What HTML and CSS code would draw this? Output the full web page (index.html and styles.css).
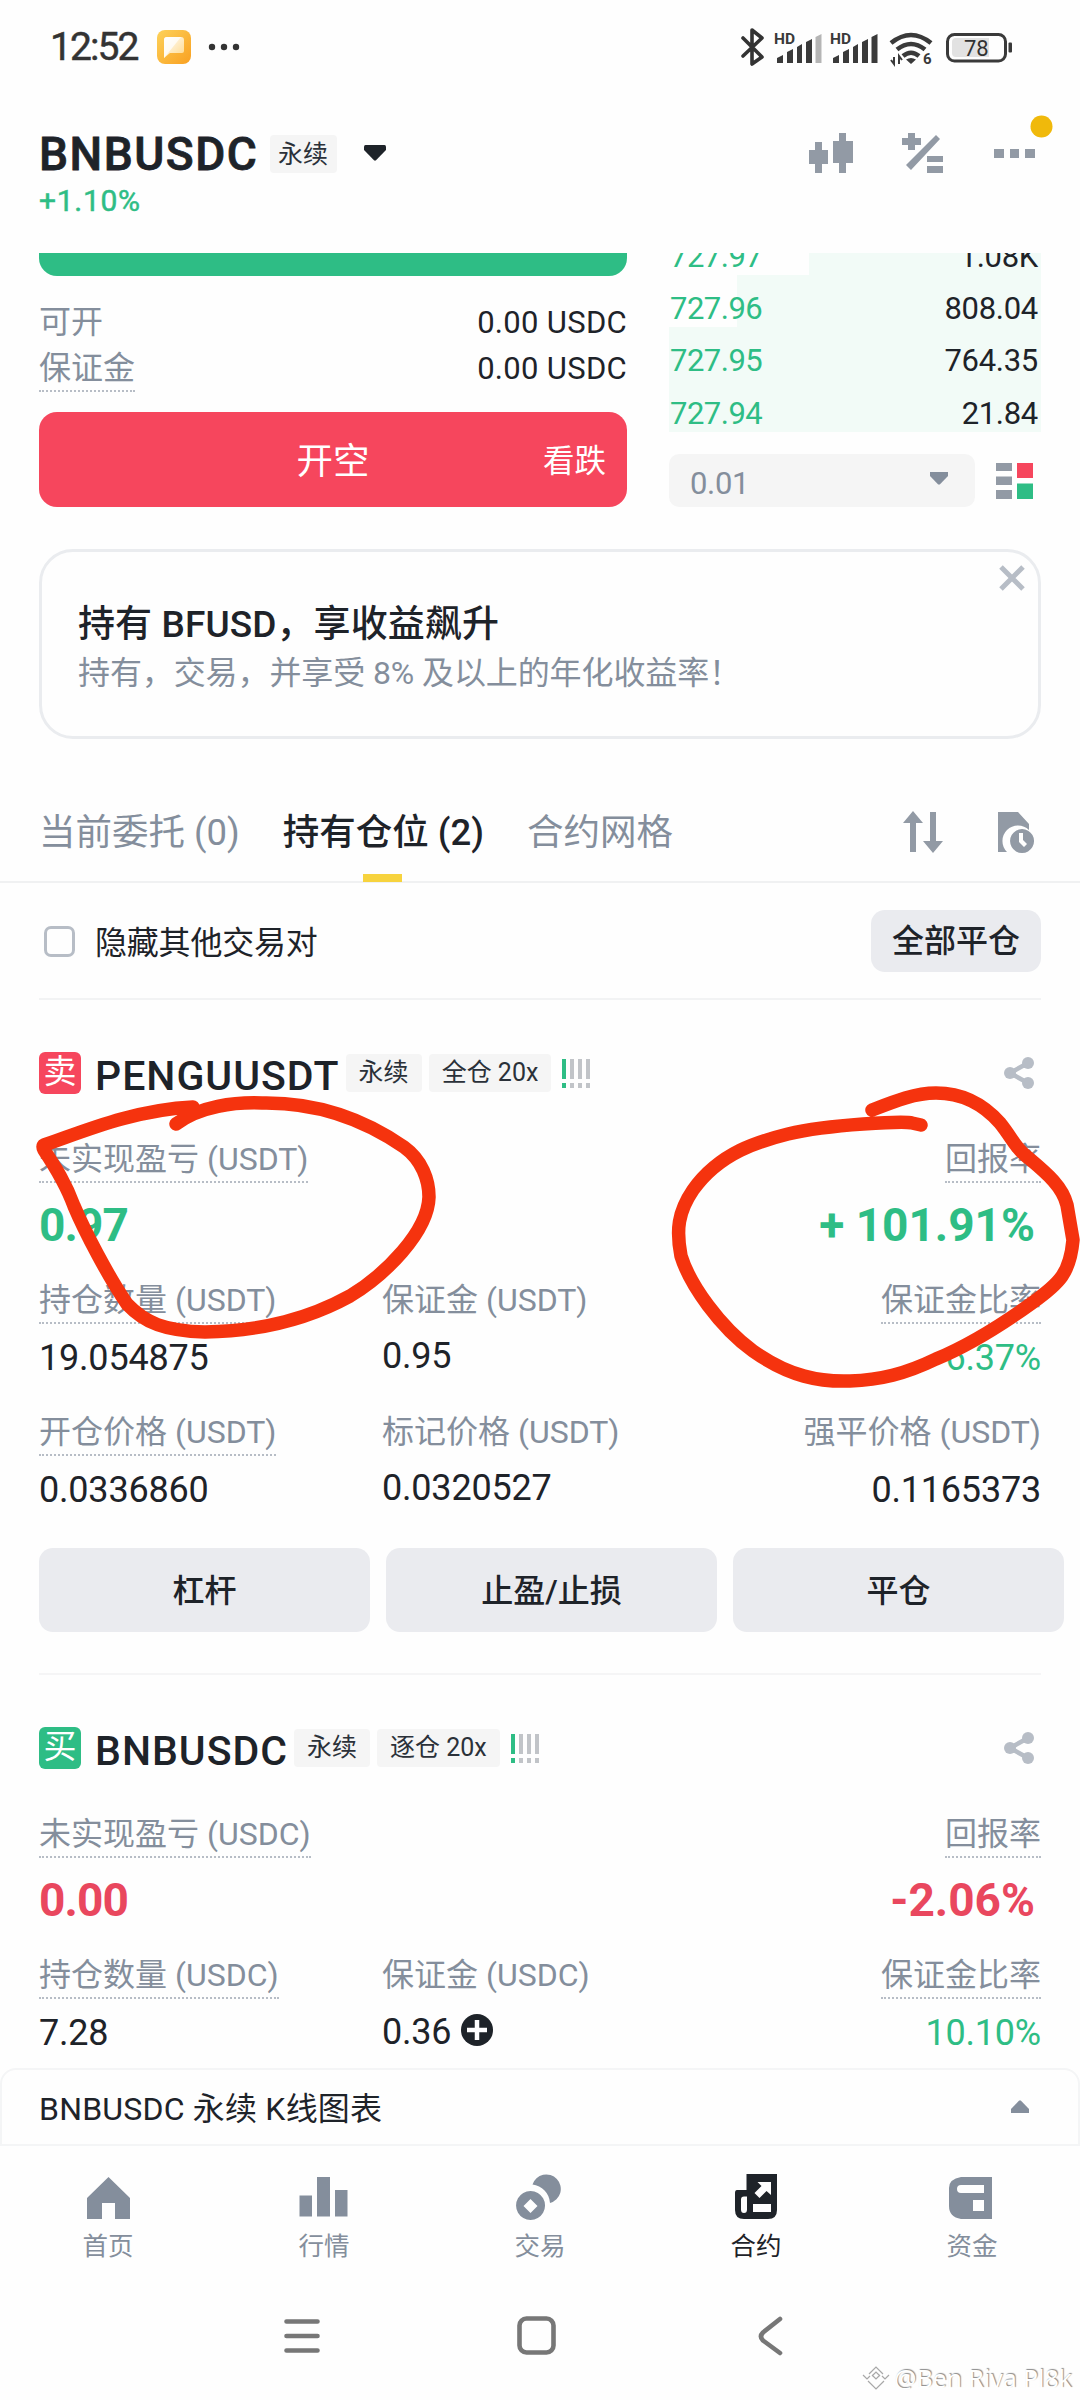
FILE: index.html
```html
<!DOCTYPE html>
<html lang="zh-CN">
<head>
<meta charset="utf-8">
<title>BNBUSDC 永续</title>
<link rel="stylesheet" href="styles.css">
</head>
<body>
<div class="screen">
  <div class="status">
    <span class="clock">12:52</span>
    <svg class="app-badge" width="34" height="34" viewBox="0 0 34 34"><defs><linearGradient id="g1" x1="0" y1="0" x2="1" y2="1"><stop offset="0" stop-color="#fdd25a"/><stop offset="1" stop-color="#f9a021"/></linearGradient><linearGradient id="g2" x1="0" y1="0" x2="1" y2="1"><stop offset="0" stop-color="#fff"/><stop offset="1" stop-color="#ffd98a"/></linearGradient></defs><rect width="34" height="34" rx="8" fill="url(#g1)"/><path d="M7 28V10q0-3 3-3h14q3 0 3 3v11q0 2-2 2H13z" fill="url(#g2)"/><path d="M7 28V10q0-3 3-3h14z" fill="#fff" opacity=".75"/></svg>
    <svg class="status-dots" width="32" height="8" viewBox="0 0 32 8" fill="#333"><circle cx="4" cy="4" r="3.2"/><circle cx="16" cy="4" r="3.2"/><circle cx="28" cy="4" r="3.2"/></svg>
    <svg class="status-icons" width="280" height="40" viewBox="735 26 280 40">
      <path d="M743 37l19 19-10 7V29l10 8-19 18" fill="none" stroke="#333" stroke-width="3.6" stroke-linejoin="round" stroke-linecap="round"/>
      <g font-size="15.5" font-weight="700" fill="#3a3a3a"><text x="774" y="43">HD</text><text x="830" y="43">HD</text></g>
      <g fill="#3a3a3a"><path d="M777 62v-5l6-3v8zM787 62V51l6-3v14zM797 62V46l5-3v19zM806 62V41l6-3v24z"/><path d="M815.500 62V36l6-3v29z" fill="#b5b5b5"/><path d="M833 62v-5l6-3v8zM843 62V51l6-3v14zM853 62V46l5-3v19zM862 62V41l6-3v24zM871.500 62V36l6-3v29z"/></g>
      <g fill="none" stroke="#3a3a3a" stroke-width="4.600"><path d="M891 42q20-16 40 0"/><path d="M897 48.500q14-11 28 0"/><path d="M903 55q8-6.500 16 0"/></g>
      <path d="M906 58.500q5-3 10 0l-5 4.500z" fill="#3a3a3a"/>
      <path d="M894 56v7l-3-4M899 63v-8l3 4" fill="none" stroke="#3a3a3a" stroke-width="2"/>
      <text x="923" y="63" font-size="15" font-weight="700" fill="#3a3a3a">6</text>
      <rect x="947.500" y="33.500" width="58" height="26.500" rx="7" fill="none" stroke="#3a3a3a" stroke-width="3"/>
      <path d="M956 37h33v19h-33q-4 0-4-4V41q0-4 4-4z" fill="#e2e2e2"/>
      <rect x="1008.500" y="41.500" width="3.500" height="10" rx="1" fill="#3a3a3a"/>
      <text x="964" y="55" font-size="22" fill="#333">78</text>
    </svg>
  </div>

  <header class="header">
    <div class="title-row">
      <h1 class="pair">BNBUSDC</h1><span class="tag tag-lg">永续</span>
      <svg class="caret" width="22" height="16" viewBox="0 0 22 16"><path d="M1.500 0h19q1.500 0 1.500 2v3L12 15.300q-1 .9-2 0L0 5V2Q0 0 1.500 0z" fill="#1e2329"/></svg>
      <svg class="header-icons" width="236" height="60" viewBox="808 110 236 60" overflow="visible">
        <g fill="#929aa5"><path d="M815 142h7v8h6v14h-6v9h-7v-9h-6v-14h6zM839 133h7v8h7v22h-7v10h-7v-10h-6v-22h6z"/>
        <path d="M908 133h7v5h6v7h-6v5h-7v-5h-6v-7h6zM936 135l4 4-29 31-5-5zM927 156h16v6h-16zM927 166h16v7h-16z"/>
        <path d="M994 149h10v9h-10zM1010 149h9v9h-9zM1025 149h10v9h-10z"/></g>
        <circle cx="1041.500" cy="126.500" r="11" fill="#f0b90b"/>
      </svg>
    </div>
    <div class="change">+1.10%</div>
  </header>

  <section class="trade">
    <div class="order-form">
      <div class="btn-long"></div>
      <div class="form-row row-a"><span class="muted">可开</span><span>0.00 USDC</span></div>
      <div class="form-row row-b"><span class="muted hint">保证金</span><span>0.00 USDC</span></div>
      <div class="btn-short"><span class="short-main">开空</span><span class="short-side">看跌</span></div>
    </div>
    <div class="book">
      <div class="levels">
        <div class="level"><span class="depth" style="width:62.400%"></span><b>727.97</b><i>1.08K</i></div>
        <div class="level"><span class="depth" style="width:81.700%"></span><b>727.96</b><i>808.04</i></div>
        <div class="level"><span class="depth" style="width:100%"></span><b>727.95</b><i>764.35</i></div>
        <div class="level"><span class="depth" style="width:100%"></span><b>727.94</b><i>21.84</i></div>
      </div>
      <div class="book-foot">
        <div class="step"><span>0.01</span><svg width="18" height="13" viewBox="0 0 18 13"><path d="M0 0h18v4L9.800 12.500h-1.600L0 4z" fill="#848e9c"/></svg></div>
        <svg width="37" height="36" viewBox="0 0 37 36"><path d="M0 0h16v8H0zM0 13.500h16v8.500H0zM0 27h16v9H0z" fill="#929aa5"/><path d="M21 0h16v15H21z" fill="#f6465d"/><path d="M21 20.500h16V36H21z" fill="#2ebd85"/></svg>
      </div>
    </div>
  </section>

  <section class="banner">
    <div class="banner-title">持有 BFUSD，享收益飙升</div>
    <div class="banner-sub">持有，交易，并享受 8% 及以上的年化收益率！</div>
    <svg class="close" width="26" height="26" viewBox="0 0 26 26"><path d="M2 2l22 22M24 2L2 24" stroke="#b7bdc6" stroke-width="5"/></svg>
  </section>

  <nav class="tabs">
    <span>当前委托 (0)</span><span class="active">持有仓位 (2)</span><span>合约网格</span>
    <svg class="tab-icons" width="134" height="44" viewBox="902 810 134 44"><g fill="#929aa5"><path d="M913 811l10 12h-7v29h-6v-29h-7zM933 853l-10-12h7v-29h6v29h7z"/><path d="M998 812h20l11 12v6a15 15 0 0 0-22 22h-9z"/><path fill-rule="evenodd" d="M1022 829a12 12 0 1 0 .1 0zM1019 833h4v7l4 4-3 3-5-5z"/></g></svg>
  </nav>

  <div class="filter">
    <span class="check"></span><span class="check-label">隐藏其他交易对</span><span class="close-all">全部平仓</span>
  </div>

  <article class="position">
    <div class="pos-head">
      <span class="side sell">卖</span><h2 class="sym">PENGUUSDT</h2><span class="tag">永续</span><span class="tag">全仓 20x</span>
      <svg class="risk" width="29" height="29" viewBox="0 0 29 29"><path d="M0 0h4v20H0zM0 24h4v5H0z" fill="#2ebd85"/><path d="M8 0h4v20H8zM8 24h4v5H8zM16 0h4v20h-4zM16 24h4v5h-4zM24 0h4v20h-4zM24 24h4v5h-4z" fill="#c1c4c8"/></svg>
      <svg class="share" width="30" height="32" viewBox="0 0 30 32"><path d="M24 6L6 16l18 10" fill="none" stroke="#b7bdc6" stroke-width="4.500"/><g fill="#b7bdc6"><circle cx="24" cy="6" r="6"/><circle cx="6" cy="16" r="6"/><circle cx="24" cy="26" r="6"/></g></svg>
    </div>
    <div class="labels"><div><span class="hint">未实现盈亏 (USDT)</span></div><div></div><div><span class="hint">回报率</span></div></div>
    <div class="big up"><span>0.97</span><span class="roi">+ 101.91%</span></div>
    <div class="labels second"><div><span class="hint">持仓数量 (USDT)</span></div><div>保证金 (USDT)</div><div><span class="hint">保证金比率</span></div></div>
    <div class="values"><div>19.054875</div><div>0.95</div><div class="up">6.37%</div></div>
    <div class="labels third"><div><span class="hint">开仓价格 (USDT)</span></div><div>标记价格 (USDT)</div><div>强平价格 (USDT)</div></div>
    <div class="values"><div>0.0336860</div><div>0.0320527</div><div>0.1165373</div></div>
    <div class="actions"><span>杠杆</span><span>止盈/止损</span><span>平仓</span></div>
  </article>

  <article class="position clipped">
    <div class="pos-head">
      <span class="side buy">买</span><h2 class="sym">BNBUSDC</h2><span class="tag">永续</span><span class="tag">逐仓 20x</span>
      <svg class="risk" width="29" height="29" viewBox="0 0 29 29"><path d="M0 0h4v20H0zM0 24h4v5H0z" fill="#2ebd85"/><path d="M8 0h4v20H8zM8 24h4v5H8zM16 0h4v20h-4zM16 24h4v5h-4zM24 0h4v20h-4zM24 24h4v5h-4z" fill="#c1c4c8"/></svg>
      <svg class="share" width="30" height="32" viewBox="0 0 30 32"><path d="M24 6L6 16l18 10" fill="none" stroke="#b7bdc6" stroke-width="4.500"/><g fill="#b7bdc6"><circle cx="24" cy="6" r="6"/><circle cx="6" cy="16" r="6"/><circle cx="24" cy="26" r="6"/></g></svg>
    </div>
    <div class="labels"><div><span class="hint">未实现盈亏 (USDC)</span></div><div></div><div><span class="hint">回报率</span></div></div>
    <div class="big down"><span>0.00</span><span>-2.06%</span></div>
    <div class="labels second"><div><span class="hint">持仓数量 (USDC)</span></div><div>保证金 (USDC)</div><div><span class="hint">保证金比率</span></div></div>
    <div class="values"><div>7.28</div><div class="with-add">0.36<svg width="32" height="32" viewBox="0 0 32 32"><circle cx="16" cy="16" r="16" fill="#1e2329"/><path d="M16 6v20M6 16h20" stroke="#fff" stroke-width="4.500"/></svg></div><div class="up">10.10%</div></div>
  </article>

  <div class="chart-bar"><span>BNBUSDC 永续 K线图表</span><svg width="18" height="13" viewBox="0 0 18 13"><path d="M0 13h18V9L9.800.5H8.200L0 9z" fill="#848e9c"/></svg></div>

  <nav class="bottom">
    <div><svg width="50" height="50" viewBox="83 2172 50 50"><path d="M108.500 2177l21.500 21v21h-15v-16h-13v16H87v-21z"/></svg>首页</div>
    <div><svg width="50" height="50" viewBox="299 2172 50 50"><path d="M299.500 2195.500h12.500v21h-12.500zM317 2177h13v39.500h-13zM335 2190h12.500v26.500H335z"/></svg>行情</div>
    <div><svg width="50" height="50" viewBox="515 2172 50 50"><path d="M532.500 2184.500a14.500 14.500 0 1 1 17.500 18.500a20 20 0 0 0-17.500-18.500z"/><path fill-rule="evenodd" d="M530.500 2191a14.500 14.500 0 1 0 .1 0zM530.500 2199l7 7-7 7-7-7z"/></svg>交易</div>
    <div class="on"><svg width="50" height="50" viewBox="731 2172 50 50"><path fill-rule="evenodd" d="M746.500 2174H777v36q0 9-9 9h-24q-9 0-9-9v-17q0-3 2-3h9.500zM744 2196.500q-3 0-3 3v10q0 3.500 3 3.500t3-3.500v-13zM753 2204v8h18v-8zM757.500 2182l4 4-7 7 5 5 7-7 4.500 4v-13z"/></svg>合约</div>
    <div><svg width="50" height="50" viewBox="947 2172 50 50"><path fill-rule="evenodd" d="M961 2177h31v42h-31q-12-2-12-13v-18q0-9 12-11zM961 2185q-4 0-4 4 0 4 4 4h23v-8zM973 2200v11h11v-11z"/></svg>资金</div>
  </nav>

  <div class="sysnav">
    <svg width="516" height="44" viewBox="280 2313 516 44" fill="none" stroke="#777" stroke-width="4.600" stroke-linecap="round" stroke-linejoin="round"><path d="M285.500 2320.500H316.500M285.500 2335H316.500M285.500 2349.500H316.500"/><rect x="518.500" y="2317.500" width="34" height="34" rx="7"/><path d="M779 2318l-17 13.500q-4 4 0 8L779 2352"/></svg>
  </div>
  <div class="watermark"><svg width="28" height="24" viewBox="0 0 28 24" fill="none" stroke="#a8a8a8" stroke-width="1.200"><path d="M7 8l7-7 7 7M10 10l4-4 4 4M1 9l4 4 3-3M27 9l-4 4-3-3M10 9l4 4 4-4M6 15l8 8 8-8"/></svg><span>@Ben Riva Pl8k</span></div>

  <svg class="marker" width="1080" height="320" viewBox="0 1080 1080 320"><g fill="none" stroke="#f5330e" stroke-width="13.500" stroke-linecap="round" stroke-linejoin="round"><path d="M176 1124C200 1106 235 1102 262 1103C320 1102 365 1120 404 1147C422 1160 429 1180 429 1197C428 1232 385 1275 350 1296C310 1318 265 1331 205 1332C165 1331 145 1323 127 1304C108 1276 85 1232 74 1206C66 1184 56 1168 44 1150Q42 1146 44 1145C75 1135 130 1110 193 1107"/><path d="M872 1110C895 1101 915 1093 936 1093C965 1093 985 1106 1000 1123C1012 1138 1015 1147 1025 1155C1045 1172 1062 1185 1067 1205L1073 1240C1070 1273 1060 1283 1032 1303C1000 1326 965 1347 936 1359C905 1374 880 1380 850 1381C820 1382 790 1377 753 1351C720 1327 690 1285 681 1256C676 1230 678 1212 693 1190C720 1152 760 1141 788 1134C830 1124 905 1121 912 1123L921 1125"/></g></svg>
</div>
</body>
</html>
```
FILE: styles.css
```css
* { box-sizing: border-box; }
body { margin: 0; background: #fefefe; color: #1e2329; font-family: Roboto, "Noto Sans CJK SC", sans-serif; }
h1, h2 { margin: 0; }
b, i { font-weight: 400; font-style: normal; }
svg { display: block; flex: none; }
.screen { position: relative; width: 1080px; height: 2400px; overflow: hidden; display: flex; flex-direction: column; background: #fefefe; }
.screen > * { flex: none; }

.status { height: 94px; display: flex; align-items: center; padding: 0 65px 0 50px; }
.clock { width: 107px; font-size: 39px; letter-spacing: -1.9px; color: #333; -webkit-text-stroke: .5px #333; }
.status-dots { margin-left: 17px; }
.status-icons { margin-left: auto; }

.header { height: 159px; padding: 38px 36px 0 39px; }
.title-row { height: 44px; display: flex; align-items: center; }
.pair { width: 231px; font-size: 46px; font-weight: 500; line-height: 44px; letter-spacing: 1.5px; -webkit-text-stroke: .8px #1e2329; }
.tag { height: 38px; padding: 0 13px; border-radius: 4px; background: #f5f5f5; font-size: 25px; line-height: 38px; white-space: nowrap; color: #2b3139; }
.tag-lg { width: 67px; padding: 0 8px; line-height: 39px; }
.caret { margin-left: 27px; margin-top: -2px; }
.header-icons { margin-left: auto; margin-top: -29px; }
.change { height: 50px; line-height: 50px; font-size: 30px; letter-spacing: .7px; color: #2ebd85; -webkit-text-stroke: .5px #2ebd85; }

.trade { height: 260px; display: flex; justify-content: space-between; padding: 0 39px; }
.order-form { width: 588px; }
.btn-long { height: 23px; background: #2ebd85; border-radius: 0 0 18px 18px; }
.form-row { display: flex; justify-content: space-between; font-size: 31px; line-height: 46px; height: 46px; letter-spacing: .3px; }
.row-a { margin-top: 23px; }
.form-row > span:last-child { margin-top: 1px; }
.form-row .muted { font-size: 32px; letter-spacing: 0; }
.muted { color: #848e9c; }
.hint { display: inline-block; line-height: 44px; border-bottom: 2px dotted #b7bdc6; }
.row-b .hint { height: 47px; line-height: 46px; }
.btn-short { height: 95px; margin-top: 21px; border-radius: 18px; background: #f6465d; color: #fff; display: grid; grid-template-columns: 1fr auto 1fr; align-items: center; padding: 0 21px 3px; }
.short-main { grid-column: 2; font-size: 36.500px; }
.short-side { font-size: 31.500px; text-align: right; }
.book { width: 372px; }
.levels { height: 179px; overflow: hidden; display: flex; flex-direction: column; justify-content: flex-end; }
.level { position: relative; flex: none; height: 52.300px; display: flex; justify-content: space-between; align-items: flex-start; padding: 11px 3px 0 1px; font-size: 31px; line-height: 46px; }
.depth { position: absolute; right: 0; top: 0; bottom: 0; background: #f2fbf7; }
.level b, .level i { position: relative; letter-spacing: -.3px; }
.level b { color: #2ebd85; letter-spacing: -.5px; }
.book-foot { margin-top: 22px; height: 53px; display: flex; align-items: center; justify-content: space-between; padding-right: 8px; }
.step { width: 306px; height: 53px; background: #f5f5f5; border-radius: 10px; display: flex; align-items: center; justify-content: space-between; padding: 5px 27px 0 21px; color: #848e9c; font-size: 31px; letter-spacing: -.3px; }
.step svg { margin-top: -9px; }

.banner { position: relative; margin: 36px 39px 0; height: 190px; border: 3px solid #eaecef; border-radius: 34px; padding: 48px 36px; }
.banner-title { font-size: 37px; line-height: 50px; font-weight: 500; letter-spacing: .1px; }
.banner-sub { font-size: 32px; line-height: 47px; color: #848e9c; letter-spacing: -.1px; white-space: nowrap; }
.close { position: absolute; right: 13px; top: 13px; }

.tabs { margin-top: 43px; height: 101px; border-bottom: 2px solid #f0f1f2; padding: 0 44px 0 39px; display: flex; gap: 43px; font-size: 36.500px; line-height: 102px; color: #848e9c; }
.tabs .active { position: relative; height: 99px; color: #1e2329; font-weight: 500; }
.tabs .active::after { content: ""; position: absolute; left: 50%; bottom: -1px; width: 39px; height: 8px; margin-left: -20px; background: #f7d33e; }
.tab-icons { margin: 28px 0 0 auto; }

.filter { height: 117px; margin: 0 39px; border-bottom: 2px solid #f2f3f4; display: flex; align-items: center; padding: 1px 0 0 5px; font-size: 32px; }
.check { width: 31px; height: 31px; border: 3px solid #b7bdc6; border-radius: 7px; }
.check-label { margin-left: 20px; margin-top: -2px; letter-spacing: -.2px; }
.close-all { margin-left: auto; width: 170px; height: 62px; border-radius: 14px; background: #eaebef; text-align: center; line-height: 63px; font-weight: 500; }

.position { height: 675px; margin: 0 39px; padding-top: 43px; border-bottom: 2px solid #f5f5f6; }
.position.clipped { height: 393px; overflow: hidden; border: 0; }
.pos-head { height: 60px; display: flex; align-items: center; padding-right: 7px; }
.side { width: 42px; height: 42px; border-radius: 6px; color: #fff; font-size: 33px; line-height: 40px; text-align: center; }
.sell { background: #f6465d; }
.buy { background: #2ebd85; }
.sym { margin: 5px 6px 0 14px; font-size: 41px; line-height: 48px; font-weight: 500; letter-spacing: 1px; }
.pos-head .tag { margin-right: 7px; }
.risk { margin-left: 4px; }
.share { margin-left: auto; }
.labels, .values { display: flex; }
.labels > :nth-child(1), .values > :nth-child(1) { width: 343px; }
.labels > :nth-child(2), .values > :nth-child(2) { flex: 1; }
.labels { margin-top: 34px; height: 46px; font-size: 32px; line-height: 44px; color: #848e9c; letter-spacing: 0; white-space: nowrap; }
.labels.second { margin-top: 28px; }
.labels.third { margin-top: 30px; }
.big { margin-top: 17px; height: 50px; display: flex; justify-content: space-between; font-size: 46px; line-height: 50px; font-weight: 700; letter-spacing: -.9px; padding: 0 6px 0 0; }
.roi { letter-spacing: 0; }
.down span:last-child { letter-spacing: 0; }
.values { margin-top: 12px; height: 44px; font-size: 36px; line-height: 45px; letter-spacing: -.2px; }
.values > :nth-child(2) { margin-top: -2px; }
.up { color: #2ebd85; }
.down { color: #e9475e; }
.with-add { display: flex; align-items: center; gap: 10px; }
.with-add svg { margin-top: -5px; }
.actions { display: grid; grid-template-columns: repeat(3, 331px); gap: 16px; margin-top: 36px; }
.actions span { height: 84px; border-radius: 14px; background: #eaebef; font-size: 32px; line-height: 86px; font-weight: 500; text-align: center; }

.chart-bar { height: 78px; border: 2px solid #f4f5f6; border-radius: 16px 16px 0 0; padding: 0 49px 2px 37px; display: flex; align-items: center; justify-content: space-between; font-size: 32px; letter-spacing: .2px; }
.bottom { height: 130px; display: grid; grid-template-columns: repeat(5, 1fr); padding-top: 26px; color: #848e9c; fill: #848e9c; font-size: 25.500px; line-height: 49px; text-align: center; }
.bottom svg { margin: 0 auto; }
.bottom .on { color: #1e2329; fill: #1e2329; }
.sysnav { height: 80px; padding: 38px 0 0 281px; }
.watermark { position: absolute; left: 862px; bottom: 4px; display: flex; align-items: center; gap: 4px; font-family: "Noto Sans", sans-serif; font-size: 25px; line-height: 36px; color: #fff; text-shadow: 1px -1px 1px #8c8c8c; white-space: nowrap; letter-spacing: -.1px; }
.marker { position: absolute; left: 0; top: 1080px; }
```
